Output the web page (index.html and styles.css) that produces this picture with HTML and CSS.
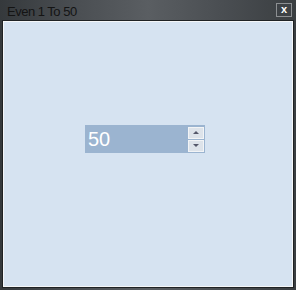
FILE: index.html
```html
<!DOCTYPE html>
<html lang="en">
<head>
	<meta charset="UTF-8">
	<title>Even 1 To 50</title>
	<link rel="stylesheet" href="styles.css">
</head>
<body>
	<div class="window">
		<div class="title-bar">
			<span class="title">Even 1 To 50</span>
			<a class="close-btn">x</a>
		</div>
		<div class="client">
			<div class="spinner">
				<div class="spin-value">50</div>
				<div class="spin-buttons">
					<a class="spin-btn"><i class="arrow arrow-up"></i></a>
					<a class="spin-btn"><i class="arrow arrow-down"></i></a>
				</div>
			</div>
		</div>
	</div>
</body>
</html>
```

FILE: styles.css
```css
body,div{
    margin: 0;
    padding: 0;
}
body{
    width: 296px;
    height: 290px;
    overflow: hidden;
    background: #2e3134;
    font-family: "Liberation Sans", "DejaVu Sans", sans-serif;
}
a{
    text-decoration: none;
    cursor: default;
}
i{
    font-style: normal;
}
.window{
    display: flex;
    flex-direction: column;
    width: 296px;
    height: 290px;
    box-sizing: border-box;
    padding: 0 3px 3px 3px;
    background: linear-gradient(to right, #35393c 0%, #4a4e52 25%, #5a5e62 50%, #4a4e52 75%, #3a3e41 100%);
}
.title-bar{
    display: flex;
    align-items: center;
    justify-content: space-between;
    height: 21px;
    padding: 0 1px 0 4px;
}
.title{
    font-size: 13px;
    color: #141414;
    letter-spacing: -0.5px;
    padding-top: 1px;
}
.close-btn{
    display: block;
    width: 14px;
    height: 12px;
    border: 1px solid #8c8f92;
    background: #3d4145;
    color: #fff;
    font-size: 11px;
    font-weight: bold;
    line-height: 11px;
    text-align: center;
    margin-top: -2px;
}
.client{
    flex: 1;
    display: flex;
    align-items: flex-start;
    border: 1px solid #f4f6f8;
    outline: 1px solid #1f2224;
    background: #d6e3f1;
    padding: 103px 0 0 81px;
}
.spinner{
    display: flex;
    align-items: center;
    height: 28px;
    background: #9bb4d0;
}
.spin-value{
    width: 102px;
    padding-left: 3px;
    box-sizing: border-box;
    font-size: 20px;
    line-height: 28px;
    color: #fff;
}
.spin-buttons{
    display: flex;
    flex-direction: column;
    gap: 1px;
    padding: 1px;
}
.spin-btn{
    display: flex;
    align-items: center;
    justify-content: center;
    width: 14px;
    height: 10px;
    border: 1px solid #f2f4f6;
    background: #dde3ea;
}
.arrow{
    width: 0;
    height: 0;
    border-left: 3px solid transparent;
    border-right: 3px solid transparent;
}
.arrow-up{
    border-bottom: 3px solid #55586a;
}
.arrow-down{
    border-top: 3px solid #55586a;
}
```
